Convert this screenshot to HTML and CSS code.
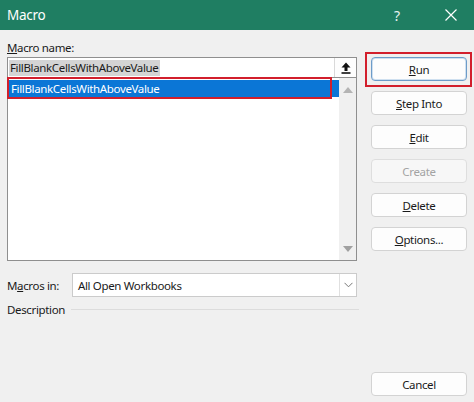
FILE: index.html
```html
<!DOCTYPE html>
<html>
<head>
<meta charset="utf-8">
<link rel="stylesheet" href="styles.css">
</head>
<body>
<div class="dialog">
  <div class="titlebar">
    <span class="title">Macro</span>
    <span class="help">?</span>
    <span class="close"><svg width="12" height="12" viewBox="0 0 12 12"><path d="M0.5 0.5L11.5 11.5M11.5 0.5L0.5 11.5" stroke="#fff" stroke-width="1.2" fill="none"/></svg></span>
  </div>
  <div class="body">
    <div class="left">
      <div class="label"><u>M</u>acro name:</div>
      <div class="namebox">
        <span class="nametext">FillBlankCellsWithAboveValue</span>
        <span class="upbtn"><svg width="10" height="12" viewBox="0 0 10 12"><path d="M5 0.5L9.5 5.5H6.5V9H3.5V5.5H0.5Z" fill="#111"/><rect x="0.5" y="10.2" width="9" height="1.6" fill="#111"/></svg></span>
      </div>
      <div class="listbox">
        <div class="items">
          <div class="item sel">FillBlankCellsWithAboveValue</div>
          <div class="mark mark-item"></div>
        </div>
        <div class="scroll">
          <svg width="10" height="6" viewBox="0 0 10 6"><path d="M5 0L10 6H0Z" fill="#b4b4b4"/></svg>
          <svg width="10" height="6" viewBox="0 0 10 6"><path d="M0 0H10L5 6Z" fill="#a0a0a0"/></svg>
        </div>
      </div>
      <div class="inrow">
        <span class="inlabel">M<u>a</u>cros in:</span>
        <div class="select">
          <span class="selval">All Open Workbooks</span>
          <span class="selbtn"><svg width="9" height="6" viewBox="0 0 9 6"><path d="M0.5 0.8L4.5 4.8L8.5 0.8" stroke="#777" stroke-width="1" fill="none"/></svg></span>
        </div>
      </div>
      <div class="descrow">
        <span>Description</span>
        <span class="rule"></span>
      </div>
    </div>
    <div class="right">
      <div class="runwrap">
        <button class="btn default"><u>R</u>un</button>
        <div class="mark mark-run"></div>
      </div>
      <button class="btn"><u>S</u>tep Into</button>
      <button class="btn"><u>E</u>dit</button>
      <button class="btn disabled">Create</button>
      <button class="btn"><u>D</u>elete</button>
      <button class="btn"><u>O</u>ptions...</button>
      <button class="btn cancel">Cancel</button>
    </div>
  </div>
</div>
</body>
</html>
```
FILE: styles.css
```css
* { box-sizing: border-box; }
html, body { margin: 0; padding: 0; }
body {
  width: 474px;
  height: 402px;
  background: #f0f0f0;
  font-family: "Noto Sans", "Open Sans", sans-serif;
  font-size: 11.5px;
  letter-spacing: -0.35px;
  color: #1a1a1a;
  overflow: hidden;
}
.dialog { width: 474px; height: 402px; display: flex; flex-direction: column; }
.titlebar {
  height: 30px;
  background: #1f7e62;
  color: #fff;
  display: flex;
  align-items: center;
  padding-left: 7px;
  flex-shrink: 0;
}
.title { font-size: 13.5px; letter-spacing: -0.3px; flex: 1; }
.help { font-size: 14px; width: 10px; margin-right: 41px; color: #eaf3f0; }
.close { width: 29px; display: flex; align-items: center; }
.body {
  flex: 1;
  display: flex;
  padding: 0 7px 6px 7px;
}
.left { width: 350px; display: flex; flex-direction: column; }
.label { margin-top: 9px; height: 18px; line-height: 18px; }
.namebox {
  height: 20px;
  background: #fff;
  border: 1px solid #8f8f8f;
  border-bottom: none;
  display: flex;
  align-items: center;
  padding-left: 1px;
}
.nametext {
  background: #d4d4d4;
  line-height: 16px;
  padding: 0 1px;
  flex: none;
}
.upbtn {
  margin-left: auto;
  width: 22px;
  height: 19px;
  border-left: 1px solid #d9d9d9;
  display: flex;
  align-items: center;
  justify-content: center;
  background: #fdfdfd;
}
.listbox {
  height: 184px;
  background: #fff;
  border: 1px solid #8f8f8f;
  display: flex;
}
.items { flex: 1; position: relative; padding: 2px 0 0 1px; }
.item { height: 17px; line-height: 17px; padding-left: 2px; }
.item.sel { background: #0b76d6; color: #fff; }
.scroll {
  width: 17px;
  background: #f0f0f0;
  display: flex;
  flex-direction: column;
  justify-content: space-between;
  align-items: center;
  padding: 9px 0 8px 0;
}
.mark { position: absolute; border: 2px solid #d21f2c; pointer-events: none; }
.mark-item { left: -1px; top: -1px; width: 325px; height: 22px; }
.inrow { display: flex; align-items: center; margin-top: 12px; height: 24px; }
.inlabel { width: 65px; }
.select {
  flex: 1;
  height: 24px;
  background: #fff;
  border: 1px solid #cbcbcb;
  display: flex;
  align-items: center;
  padding-left: 5px;
}
.selval { flex: 1; }
.selbtn {
  width: 17px;
  height: 22px;
  border-left: 1px solid #e0e0e0;
  display: flex;
  align-items: center;
  justify-content: center;
}
.descrow { display: flex; align-items: center; margin-top: 3px; height: 18px; }
.rule { flex: 1; height: 1px; background: #dcdcdc; margin-left: 6px; margin-right: -2px; }
.right {
  margin-left: 14px;
  width: 96px;
  display: flex;
  flex-direction: column;
  padding-top: 27px;
  gap: 10px;
}
.runwrap { position: relative; }
.mark-run { left: -6px; top: -5px; width: 107px; height: 35px; }
.btn {
  display: block;
  width: 96px;
  height: 24px;
  background: #fdfdfd;
  border: 1px solid #d3d3d3;
  border-radius: 4px;
  font-family: inherit;
  font-size: 11.5px;
  letter-spacing: -0.35px;
  color: #1a1a1a;
  padding: 0;
}
.btn.default { border-color: #6d9cc9; box-shadow: inset 0 0 0 1px #cfe0f0; }
.btn.disabled { color: #a3a3a3; background: #f7f7f7; border-color: #dedede; }
.btn.cancel { margin-top: auto; }
```
